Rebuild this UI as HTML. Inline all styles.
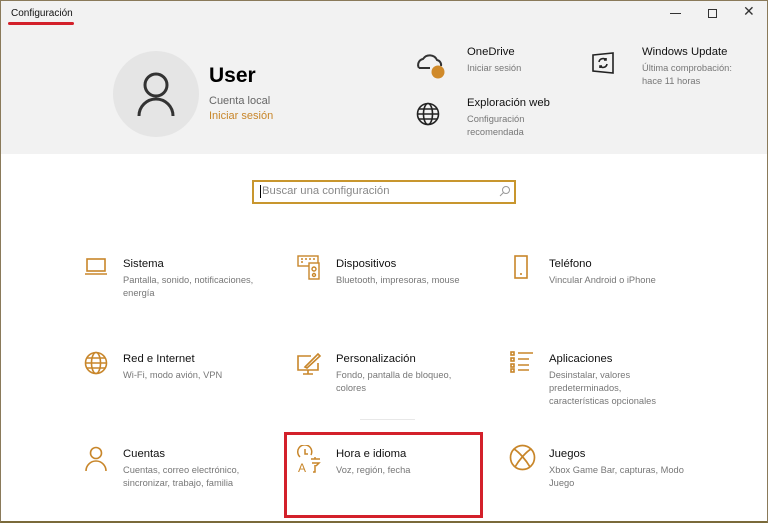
<!DOCTYPE html>
<html><head><meta charset="utf-8"><style>
*{margin:0;padding:0;box-sizing:border-box}
body{width:768px;height:523px;overflow:hidden;background:#fff;font-family:"Liberation Sans",sans-serif;position:relative}
.frame{position:absolute;left:0;top:0;width:768px;height:523px;border:1px solid #8a7a5a;border-bottom:2px solid #7a6a3a}
.hdr{position:absolute;left:1px;top:1px;width:766px;height:153px;background:#f2f2f2}
.a{position:absolute;white-space:nowrap}
.t{font-size:11.3px;color:#111}
.d{font-size:9.3px;color:#777;line-height:13px}
svg{position:absolute}
</style></head><body>
<div class="hdr"></div>
<div class="frame"></div>
<div class="a" style="left:11px;top:8px;font-size:10px;color:#111">Configuración</div>
<div class="a" style="left:8px;top:22px;width:66px;height:3px;background:#d3202a;border-radius:2px"></div>
<div class="a" style="left:670px;top:13px;width:11px;height:1px;background:#333"></div>
<div class="a" style="left:708px;top:9px;width:9px;height:9px;border:1px solid #333"></div>
<div class="a" style="left:743px;top:3px;font-size:14px;color:#333">✕</div>

<div class="a" style="left:113px;top:51px;width:86px;height:86px;border-radius:50%;background:#e5e5e5"></div>
<svg style="left:136px;top:71px" width="40" height="46" viewBox="0 0 40 46"><circle cx="20" cy="14" r="11" fill="none" stroke="#333" stroke-width="3"/><path d="M3 45 A17 17 0 0 1 37 45" fill="none" stroke="#333" stroke-width="3"/></svg>
<div class="a" style="left:209px;top:64px;font-size:21px;font-weight:bold;color:#000">User</div>
<div class="a" style="left:209px;top:95px;font-size:11px;color:#666">Cuenta local</div>
<div class="a" style="left:209px;top:110px;font-size:11px;color:#c8862a">Iniciar sesión</div>

<svg style="left:415px;top:52px" width="32" height="28" viewBox="0 0 32 28"><path d="M4 16 A6 6 0 0 1 8 7 A8 8 0 0 1 22 8 A5 5 0 0 1 26 14" fill="none" stroke="#333" stroke-width="2"/><path d="M4 16 L15 16" stroke="#333" stroke-width="2"/><circle cx="23" cy="20" r="6.5" fill="#d08a2a"/></svg>
<div class="a t" style="left:467px;top:46px">OneDrive</div>
<div class="a d" style="left:467px;top:62px">Iniciar sesión</div>
<svg style="left:416px;top:102px" width="24" height="24" viewBox="0 0 24 24" fill="none" stroke="#222" stroke-width="1.6"><circle cx="12" cy="12" r="10.5"/><ellipse cx="12" cy="12" rx="4.5" ry="10.5"/><path d="M1.5 12H22.5M3 7H21M3 17H21"/></svg>
<div class="a t" style="left:467px;top:97px">Exploración web</div>
<div class="a d" style="left:467px;top:113px">Configuración<br>recomendada</div>
<svg style="left:592px;top:52px" width="22" height="22" viewBox="0 0 22 22" fill="none" stroke="#222" stroke-width="1.6"><path d="M1 3L21 1V21L1 19Z"/><path d="M7 10A4 4 0 0 1 14 8M15 12A4 4 0 0 1 8 14M14 6V8H12M8 16V14H10"/></svg>
<div class="a t" style="left:642px;top:46px">Windows Update</div>
<div class="a d" style="left:642px;top:62px">Última comprobación:<br>hace 11 horas</div>

<div class="a" style="left:252px;top:180px;width:264px;height:24px;border:2px solid #c8962e;background:#fff"></div>
<div class="a" style="left:260px;top:185px;width:1px;height:13px;background:#000"></div>
<div class="a" style="left:262px;top:185px;font-size:11.3px;color:#888">Buscar una configuración</div>
<svg style="left:499px;top:185px" width="12" height="12" viewBox="0 0 12 12" fill="none" stroke="#999"><circle cx="7" cy="5" r="3.5"/><path d="M4.5 7.5L1 11"/></svg>

<!-- row1 -->
<svg style="left:84px;top:257px" width="24" height="20" viewBox="0 0 24 20" fill="none" stroke="#c8862a" stroke-width="1.6"><rect x="3" y="2" width="18" height="12"/><path d="M1 17H23"/></svg>
<div class="a t" style="left:123px;top:258px">Sistema</div>
<div class="a d" style="left:123px;top:274px">Pantalla, sonido, notificaciones,<br>energía</div>
<svg style="left:297px;top:255px" width="26" height="26" viewBox="0 0 26 26" fill="none" stroke="#c8862a" stroke-width="1.4"><rect x="1" y="1" width="20" height="10"/><path d="M4 4h2M8 4h2M12 4h2M16 4h2M4 7h2"/><rect x="12" y="8" width="10" height="16" fill="#fff"/><circle cx="17" cy="14" r="2"/><circle cx="17" cy="20" r="1.5"/></svg>
<div class="a t" style="left:336px;top:258px">Dispositivos</div>
<div class="a d" style="left:336px;top:274px">Bluetooth, impresoras, mouse</div>
<svg style="left:513px;top:255px" width="16" height="26" viewBox="0 0 16 26" fill="none" stroke="#c8862a" stroke-width="1.6"><rect x="2" y="1" width="12" height="22"/><path d="M7 19h2"/></svg>
<div class="a t" style="left:549px;top:258px">Teléfono</div>
<div class="a d" style="left:549px;top:274px">Vincular Android o iPhone</div>

<!-- row2 -->
<svg style="left:84px;top:351px" width="24" height="24" viewBox="0 0 24 24" fill="none" stroke="#c8862a" stroke-width="1.6"><circle cx="12" cy="12" r="10.5"/><ellipse cx="12" cy="12" rx="4.5" ry="10.5"/><path d="M1.5 12H22.5M3 7H21M3 17H21"/></svg>
<div class="a t" style="left:123px;top:353px">Red e Internet</div>
<div class="a d" style="left:123px;top:369px">Wi-Fi, modo avión, VPN</div>
<svg style="left:297px;top:351px" width="26" height="26" viewBox="0 0 26 26" fill="none" stroke="#c8862a" stroke-width="1.6"><path d="M14 5H1V19H21V12"/><path d="M11 19V23M6 23H16"/><path d="M8 16L21 3L23 5L10 17Z"/></svg>
<div class="a t" style="left:336px;top:353px">Personalización</div>
<div class="a d" style="left:336px;top:369px">Fondo, pantalla de bloqueo,<br>colores</div>
<svg style="left:509px;top:351px" width="26" height="22" viewBox="0 0 26 22" fill="none" stroke="#c8862a" stroke-width="1.6"><rect x="2" y="1" width="3" height="3"/><rect x="2" y="7" width="3" height="3"/><rect x="2" y="13" width="3" height="3"/><rect x="2" y="18" width="3" height="3"/><path d="M9 2H24M9 8H20M9 14H20M9 19H20"/></svg>
<div class="a t" style="left:549px;top:353px">Aplicaciones</div>
<div class="a d" style="left:549px;top:369px">Desinstalar, valores<br>predeterminados,<br>características opcionales</div>

<div class="a" style="left:360px;top:419px;width:55px;height:1px;background:#e8e8e8"></div>

<!-- row3 -->
<svg style="left:85px;top:446px" width="22" height="26" viewBox="0 0 22 26" fill="none" stroke="#c8862a" stroke-width="1.6"><circle cx="11" cy="7" r="5.5"/><path d="M1 25A10 10 0 0 1 21 25"/></svg>
<div class="a t" style="left:123px;top:448px">Cuentas</div>
<div class="a d" style="left:123px;top:464px">Cuentas, correo electrónico,<br>sincronizar, trabajo, familia</div>
<svg style="left:296px;top:445px" width="28" height="28" viewBox="0 0 28 28" fill="none" stroke="#c8862a" stroke-width="1.5"><path d="M4 12A7 7 0 1 1 15 10"/><path d="M9 4V9H12"/><text x="2" y="27" font-size="12" fill="#c8862a" stroke="none" font-family="Liberation Sans,sans-serif">A</text><path d="M15 14H24M19 12V14M16 18H23L20 21M19 20V27H17"/></svg>
<div class="a t" style="left:336px;top:448px">Hora e idioma</div>
<div class="a d" style="left:336px;top:464px">Voz, región, fecha</div>
<svg style="left:509px;top:444px" width="27" height="27" viewBox="0 0 27 27" fill="none" stroke="#c8862a" stroke-width="1.7"><circle cx="13.5" cy="13.5" r="12"/><path d="M5 5C10 8 17 16 21 23M22 5C17 8 10 16 6 23"/></svg>
<div class="a t" style="left:549px;top:448px">Juegos</div>
<div class="a d" style="left:549px;top:464px">Xbox Game Bar, capturas, Modo<br>Juego</div>

<div class="a" style="left:284px;top:432px;width:199px;height:86px;border:3px solid #d3202a"></div>
</body></html>
